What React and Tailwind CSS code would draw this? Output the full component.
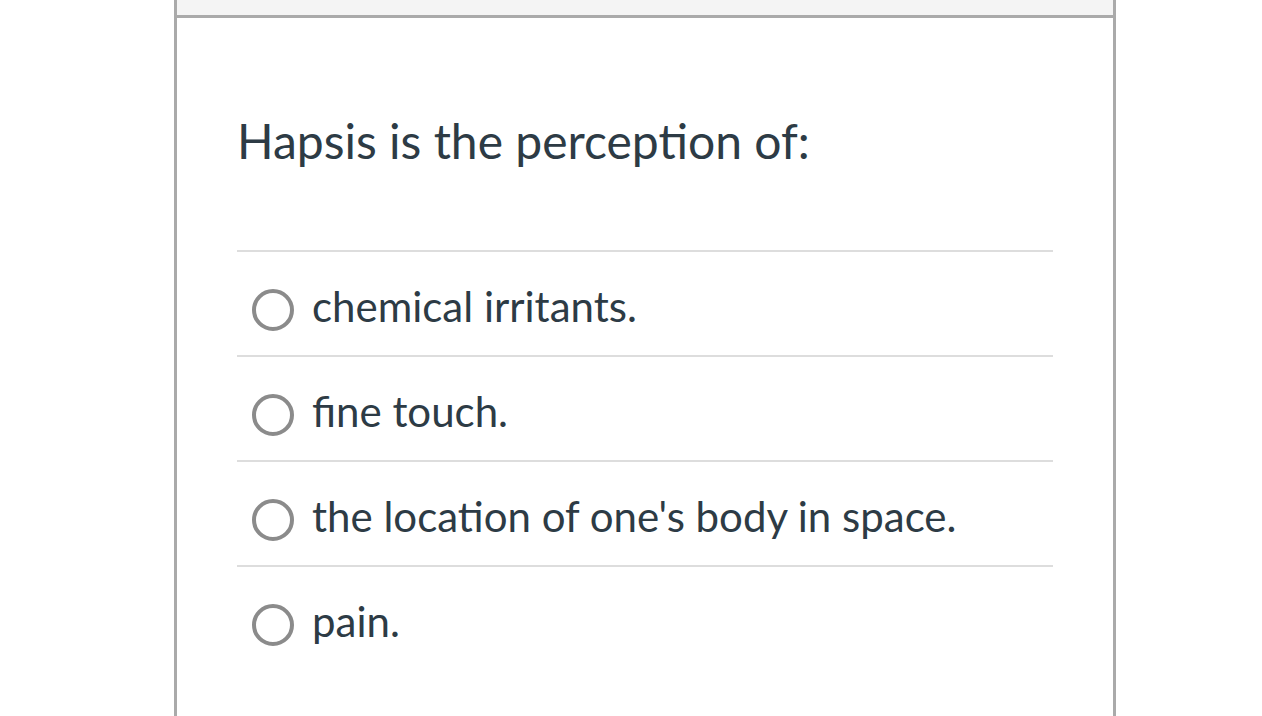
const options = [
  "chemical irritants.",
  "fine touch.",
  "the location of one's body in space.",
  "pain.",
];

export default function App() {
  return (
    <div className="min-h-[716px] bg-white" style={{ fontFamily: "Lato, 'Noto Sans', sans-serif" }}>
      <div className="ml-[174px] w-[942px] min-h-[716px] border-x-[3px] border-[#aaaaaa] text-[#2d3b45]">
        <div className="h-[15px] border-b-[3px] border-[#aaaaaa] bg-[#f4f4f4] box-content" />
        <div className="px-[60px] pt-[95px]">
          <h2 className="text-[48px] leading-[56px] font-normal">Hapsis is the perception of:</h2>
          <div className="mt-[81px]">
            {options.map((o, i) => (
              <div key={i} className="flex h-[105px] items-center border-t-2 border-[#dddddd] pl-[15px] pt-[10px]">
                <span className="mt-[2px] h-[42px] w-[42px] shrink-0 rounded-full border-[4px] border-[#8b8b8b]" />
                <span className="mb-[6px] ml-[18px] text-[42px] leading-[50px]">{o}</span>
              </div>
            ))}
          </div>
        </div>
      </div>
    </div>
  );
}
